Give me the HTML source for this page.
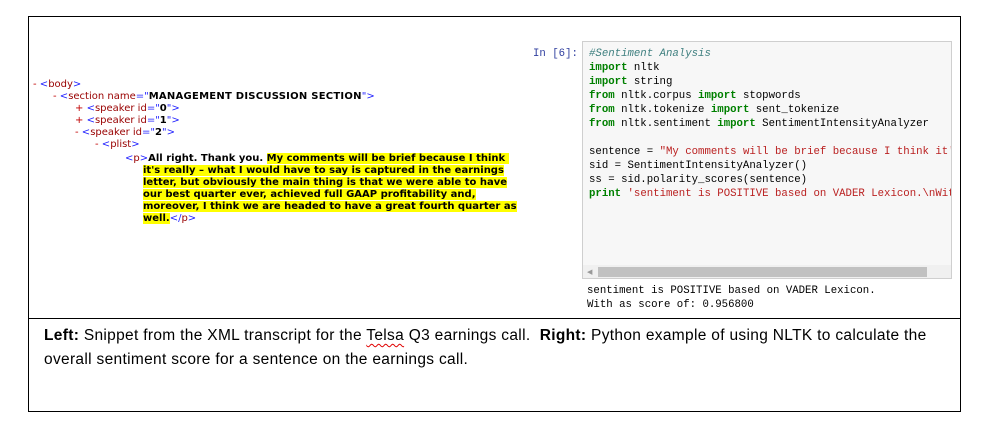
<!DOCTYPE html>
<html><head><style>
body{margin:0;width:982px;height:424px;background:#fff;position:relative;overflow:hidden}
.box{position:absolute;left:28px;top:16px;width:931px;height:394px;border:1px solid #000}
.div{position:absolute;left:28px;top:318px;width:933px;height:1px;background:#000}
.x{position:absolute;font-family:"DejaVu Sans",sans-serif;font-size:10px;white-space:pre;line-height:12px;color:#000}
.r{color:#c00000}.b{color:#2020ff}.m{color:#990000}
.hl{background:#ffff00}
.code{position:absolute;left:582px;top:41px;width:368px;height:236px;background:#f7f7f7;border:1px solid #cfcfcf;overflow:hidden}
.mono{font-family:"Liberation Mono",monospace;font-size:10.7px;line-height:14px;white-space:pre}
.k{color:#008000;font-weight:bold}.s{color:#ba2121}.c{color:#408080;font-style:italic}
.cap{position:absolute;left:44px;font-family:"Liberation Sans",sans-serif;font-size:15.5px;white-space:pre;letter-spacing:0.32px}
</style></head><body>
<div class="box"></div><div class="div"></div>
<div class="x" style="left:33px;top:79px"><span class="r">-</span> <span class="b">&lt;</span><span class="m">body</span><span class="b">&gt;</span></div>
<div class="x" style="left:53px;top:91px"><span class="r">-</span> <span class="b">&lt;</span><span class="m">section name</span><span class="b">="</span><b style="letter-spacing:0.25px">MANAGEMENT DISCUSSION SECTION</b><span class="b">"&gt;</span></div>
<div class="x" style="left:75px;top:103px"><span class="r">+</span> <span class="b">&lt;</span><span class="m">speaker id</span><span class="b">="</span><b>0</b><span class="b">"&gt;</span></div>
<div class="x" style="left:75px;top:115px"><span class="r">+</span> <span class="b">&lt;</span><span class="m">speaker id</span><span class="b">="</span><b>1</b><span class="b">"&gt;</span></div>
<div class="x" style="left:75px;top:127px"><span class="r">-</span> <span class="b">&lt;</span><span class="m">speaker id</span><span class="b">="</span><b>2</b><span class="b">"&gt;</span></div>
<div class="x" style="left:95px;top:139px"><span class="r">-</span> <span class="b">&lt;</span><span class="m">plist</span><span class="b">&gt;</span></div>
<div class="x" style="left:125px;top:153px"><span class="b">&lt;</span><span class="m">p</span><span class="b">&gt;</span><b>All right. Thank you. <span class="hl">My comments will be brief because I think </span></b></div>
<div class="x" style="left:143px;top:165px;font-weight:bold"><span class="hl">it's really – what I would have to say is captured in the earnings</span>
<span class="hl">letter, but obviously the main thing is that we were able to have</span>
<span class="hl">our best quarter ever, achieved full GAAP profitability and,</span>
<span class="hl">moreover, I think we are headed to have a great fourth quarter as</span>
<span class="hl">well.</span><span class="b" style="font-weight:normal">&lt;/</span><span class="m" style="font-weight:normal">p</span><span class="b" style="font-weight:normal">&gt;</span></div>
<div class="mono" style="position:absolute;left:533px;top:47px;color:#303f9f">In [6]:</div>
<div class="code"><div class="mono" style="position:absolute;left:6px;top:5px;color:#000"><span class="c">#Sentiment Analysis</span>
<span class="k">import</span> nltk
<span class="k">import</span> string
<span class="k">from</span> nltk.corpus <span class="k">import</span> stopwords
<span class="k">from</span> nltk.tokenize <span class="k">import</span> sent_tokenize
<span class="k">from</span> nltk.sentiment <span class="k">import</span> SentimentIntensityAnalyzer

sentence = <span class="s">"My comments will be brief because I think it's</span>
sid = SentimentIntensityAnalyzer()
ss = sid.polarity_scores(sentence)
<span class="k">print</span> <span class="s">'sentiment is POSITIVE based on VADER Lexicon.\nWith</span></div>
<div style="position:absolute;left:0;top:223px;width:368px;height:13px;background:#f0f0f0"></div>
<div style="position:absolute;left:15px;top:225px;width:329px;height:10px;background:#c1c1c1"></div>
<div style="position:absolute;left:4px;top:226px;font-size:7px;color:#999;font-family:'DejaVu Sans'">◀</div>
</div>
<div class="mono" style="position:absolute;left:587px;top:284px">sentiment is POSITIVE based on VADER Lexicon.
With as score of: 0.956800</div>
<div class="cap" style="top:327px"><b>Left:</b> Snippet from the XML transcript for the <span style="text-decoration:underline wavy #e00000;text-underline-offset:3px;text-decoration-thickness:1px">Telsa</span> Q3 earnings call.  <b>Right:</b> Python example of using NLTK to calculate the</div>
<div class="cap" style="top:351px">overall sentiment score for a sentence on the earnings call.</div>
</body></html>
